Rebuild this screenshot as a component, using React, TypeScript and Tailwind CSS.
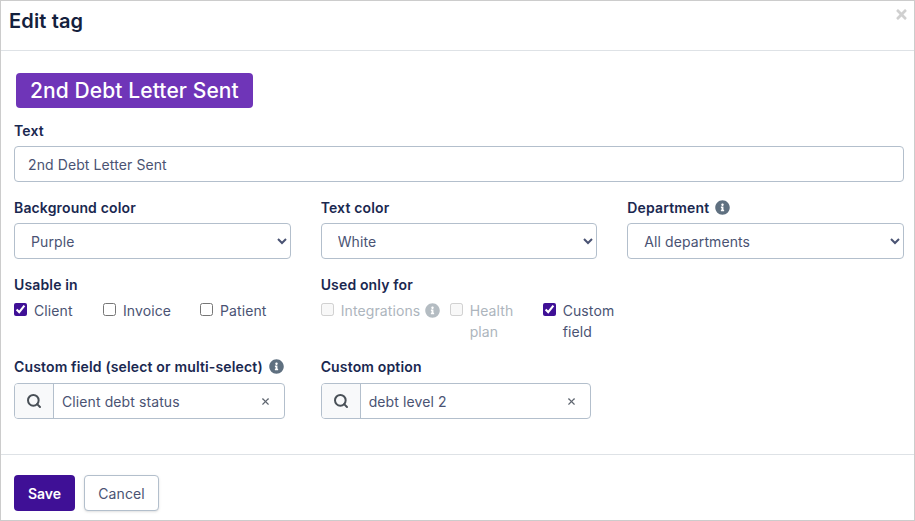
import React from 'react';
import { FaInfoCircle, FaTimes } from 'react-icons/fa';
import { LuSearch, LuX } from 'react-icons/lu';

const labelClass = 'block text-[14px] leading-[17px] font-semibold tracking-[0.15px] text-[#1a2850]';

const SelectField = ({ label, value, info }: { label: string; value: string; info?: boolean }) => (
  <div>
    <label className={`${labelClass} flex items-center gap-[6px] mb-[7px]`}>
      {label}
      {info && <FaInfoCircle className="text-[15px] text-[#5f7080]" />}
    </label>
    <select
      defaultValue={value}
      className="w-full h-[36px] pl-[12px] bg-white border border-[#b3bfcc] rounded-[4px] text-[14px] text-[#4a5373] tracking-[0.1px]"
    >
      <option>{value}</option>
    </select>
  </div>
);

const Check = ({ label, checked, disabled, className }: { label: React.ReactNode; checked?: boolean; disabled?: boolean; className?: string }) => (
  <label className={`flex shrink-0 items-start gap-[7px] text-[14px] leading-[21px] tracking-[0.1px] ${disabled ? 'text-[#adb5bd]' : 'text-[#4a5373]'} ${className ?? ''}`}>
    <input
      type="checkbox"
      defaultChecked={checked}
      disabled={disabled}
      className="w-[13px] h-[13px] mt-[3px] shrink-0 accent-[#3f1096]"
    />
    <span>{label}</span>
  </label>
);

const SearchField = ({ value, width }: { value: string; width: string }) => (
  <div className={`flex h-[36px] border border-[#b3bfcc] rounded-[4px] overflow-hidden ${width}`}>
    <div className="w-[39px] shrink-0 flex items-center justify-center bg-[#f8f9fa] border-r border-[#b3bfcc]">
      <LuSearch className="text-[16px] text-[#495057]" strokeWidth={3} />
    </div>
    <div className="flex-1 flex items-center justify-between pl-[8px] pr-[13px] text-[14px] text-[#4a5373] tracking-[0.1px]">
      <span>{value}</span>
      <LuX className="text-[11px] text-[#5f6670]" strokeWidth={2.5} />
    </div>
  </div>
);

export default function App() {
  return (
    <div className="w-[915px] h-[521px] bg-white border border-[#cccccc] relative overflow-hidden font-['Inter',sans-serif]">
      <button className="absolute top-[6px] right-[5px] text-[#d0d0d0]">
        <FaTimes className="text-[15px]" />
      </button>
      <div className="h-[50px] border-b border-[#dee2e6] pl-[8px] pt-[7px]">
        <h1 className="text-[20px] leading-[26px] font-semibold tracking-[0.15px] text-[#14213d]">Edit tag</h1>
      </div>

      <div className="h-[404px] border-b border-[#dee2e6] pl-[13px] pr-[10px] pt-[22px]">
        <span className="inline-block ml-[2px] px-[14px] h-[35px] leading-[35px] rounded-[4px] bg-[#6f35b8] text-white text-[21px] font-medium tracking-[0.1px]">
          2nd Debt Letter Sent
        </span>

        <label className={`${labelClass} mt-[14px] mb-[7px]`}>Text</label>
        <input
          readOnly
          value="2nd Debt Letter Sent"
          className="block w-full h-[36px] px-[13px] border border-[#b3bfcc] rounded-[4px] text-[14px] text-[#4a5373] tracking-[0.1px]"
        />

        <div className="grid grid-cols-3 gap-x-[30px] mt-[17px]">
          <SelectField label="Background color" value="Purple" />
          <SelectField label="Text color" value="White" />
          <SelectField label="Department" value="All departments" info />
        </div>

        <div className="grid grid-cols-3 gap-x-[30px] mt-[17px]">
          <div>
            <div className={`${labelClass} mb-[7px]`}>Usable in</div>
            <div className="flex">
              <Check label="Client" checked className="w-[89px]" />
              <Check label="Invoice" className="w-[97px]" />
              <Check label="Patient" />
            </div>
          </div>
          <div>
            <div className={`${labelClass} mb-[7px]`}>Used only for</div>
            <div className="flex">
              <Check
                disabled
                className="w-[129px]"
                label={
                  <span className="flex items-center gap-[5px]">
                    Integrations <FaInfoCircle className="text-[15px] text-[#b4bcc2]" />
                  </span>
                }
              />
              <Check disabled label={<>Health<br />plan</>} className="w-[93px]" />
              <Check checked label={<>Custom<br />field</>} />
            </div>
          </div>
        </div>

        <div className="grid grid-cols-3 gap-x-[30px] mt-[16px]">
          <div>
            <label className={`${labelClass} flex items-center gap-[6px] mb-[8px] whitespace-nowrap`}>
              Custom field (select or multi-select)
              <FaInfoCircle className="text-[15px] text-[#5f7080]" />
            </label>
            <SearchField value="Client debt status" width="w-[271px]" />
          </div>
          <div>
            <label className={`${labelClass} mb-[8px]`}>Custom option</label>
            <SearchField value="debt level 2" width="w-[270px]" />
          </div>
        </div>
      </div>

      <div className="flex gap-[9px] px-[13px] pt-[20px]">
        <button className="w-[61px] h-[36px] rounded-[4px] bg-[#3f1096] text-white text-[14px] font-semibold">Save</button>
        <button className="w-[75px] h-[36px] rounded-[4px] bg-white border border-[#b3bfcc] shadow-sm text-[14px] text-[#4a5373] tracking-[0.1px]">Cancel</button>
      </div>
    </div>
  );
}
